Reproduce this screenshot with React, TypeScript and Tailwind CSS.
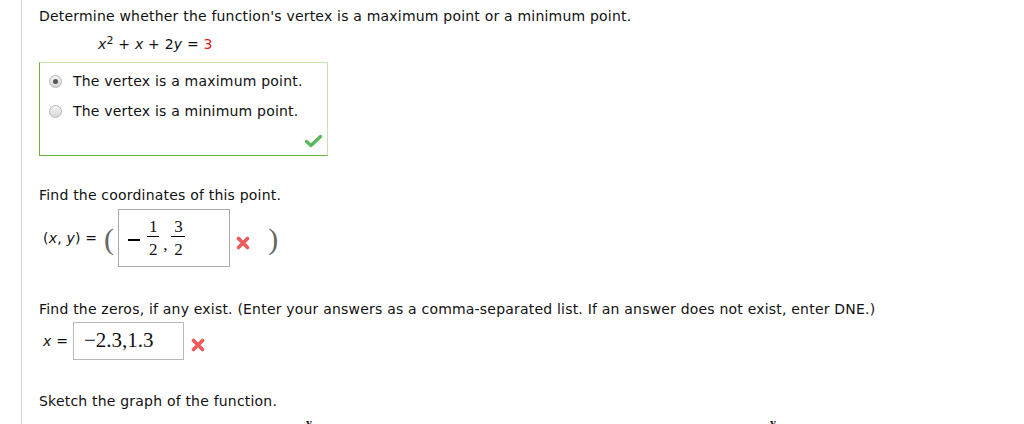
import React from "react";

const sans = { fontFamily: '"DejaVu Sans", Verdana, sans-serif' };
const serif = { fontFamily: '"Liberation Serif", "Times New Roman", serif' };

function Radio({ checked }: { checked?: boolean }) {
  return (
    <span className="relative inline-block w-[13px] h-[13px] rounded-full border border-[#b5b5b5] bg-gradient-to-b from-[#f4f4f4] to-[#d6d6d6] shrink-0">
      {checked && (
        <span className="absolute left-[3px] top-[3px] w-[5px] h-[5px] rounded-full bg-[#555]" />
      )}
    </span>
  );
}

function Cross() {
  return (
    <svg width="14" height="14" viewBox="0 0 14 14">
      <path d="M2.5 2.5 L11.5 11.5 M11.5 2.5 L2.5 11.5" stroke="#ef5a5a" strokeWidth="3.6" strokeLinecap="round" />
    </svg>
  );
}

function Check() {
  return (
    <svg width="19" height="14" viewBox="0 0 19 14">
      <path d="M2.5 7.5 L7 11.5 L16.5 2.5" fill="none" stroke="#5cb85c" strokeWidth="3.4" strokeLinecap="round" strokeLinejoin="round" />
    </svg>
  );
}

function Frac({ n, d, w }: { n: string; d: string; w: string }) {
  return (
    <span className="inline-flex flex-col items-center leading-none" style={serif}>
      <span className="text-[17px] leading-[15px]">{n}</span>
      <span className={`${w} h-px bg-black mt-[2px]`} />
      <span className="text-[17px] leading-[15px] mt-[5px]">{d}</span>
    </span>
  );
}

export default function App() {
  return (
    <div className="w-[1024px] h-[424px] overflow-hidden bg-white text-[14px] tracking-[0.2px] text-[#111]" style={sans}>
      <div className="ml-[21px] h-full border-l border-[#d2d2d2] pl-[17px] pt-[8px]">
        <p className="leading-[16px]">Determine whether the function's vertex is a maximum point or a minimum point.</p>
        <p className="mt-[12px] ml-[59px] leading-[16px]">
          <i>x</i>
          <sup className="text-[11px]">2</sup> + <i>x</i> + 2<i>y</i> = <span className="text-[#e8141c]">3</span>
        </p>

        <div className="mt-[10px] w-[289px] h-[94px] border border-[#c7e3b4] border-l-[#6ab23c] border-b-[#6ab23c] relative">
          <div className="flex items-center gap-[11px] ml-[9px] mt-[10px] h-[16px]">
            <Radio checked />
            <span>The vertex is a maximum point.</span>
          </div>
          <div className="flex items-center gap-[11px] ml-[9px] mt-[14px] h-[16px]">
            <Radio />
            <span>The vertex is a minimum point.</span>
          </div>
          <div className="absolute right-[4px] bottom-[7px]">
            <Check />
          </div>
        </div>

        <p className="mt-[31px] leading-[16px]">Find the coordinates of this point.</p>
        <div className="flex items-center mt-[6px] h-[58px]">
          <span className="ml-[4px] w-[61px] whitespace-nowrap">(<i>x</i>, <i>y</i>) =</span>
          <span className="text-[30px] leading-none text-[#666] mt-[2px]" style={serif}>(</span>
          <div className="ml-[4px] w-[112px] h-[58px] border border-[#a8a8a8] flex items-center pl-[9px] tracking-normal" style={serif}>
            <span className="w-[12px] h-[1.5px] bg-black mt-[4px] mr-[7px]" />
            <Frac n="1" d="2" w="w-[12px]" />
            <span className="text-[17px] mt-[14px] mx-[4px]">,</span>
            <Frac n="3" d="2" w="w-[14px]" />
          </div>
          <span className="ml-[6px] mt-[10px]">
            <Cross />
          </span>
          <span className="ml-[18px] text-[30px] leading-none text-[#666] mt-[2px]" style={serif}>)</span>
        </div>

        <p className="mt-[34px] leading-[16px]">Find the zeros, if any exist. (Enter your answers as a comma-separated list. If an answer does not exist, enter DNE.)</p>
        <div className="flex items-center mt-[5px] h-[38px]">
          <span className="ml-[4px] w-[30px] whitespace-nowrap"><i>x</i> =</span>
          <div className="w-[111px] h-[38px] border border-[#b8b8b8] flex items-center pl-[10px] text-[21px] tracking-normal" style={serif}>
            −2.3,1.3
          </div>
          <span className="ml-[7px] mt-[8px]">
            <Cross />
          </span>
        </div>

        <p className="mt-[33px] leading-[16px]">Sketch the graph of the function.</p>
        <div className="relative h-[20px]">
          <span className="absolute left-[267px] top-[5px] text-[12px] font-bold" style={serif}>y</span>
          <span className="absolute left-[731px] top-[5px] text-[12px] font-bold" style={serif}>y</span>
        </div>
      </div>
    </div>
  );
}
